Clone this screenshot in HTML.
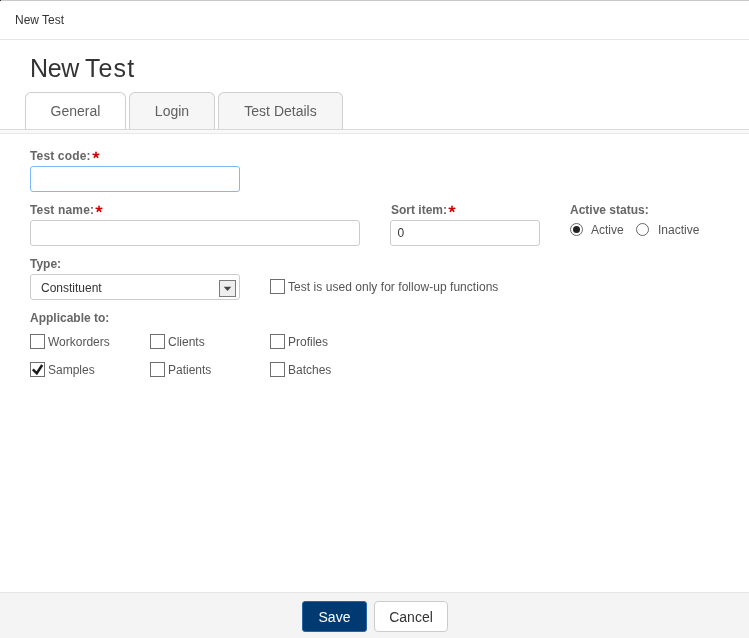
<!DOCTYPE html>
<html><head><meta charset="utf-8">
<style>
*{box-sizing:border-box;margin:0;padding:0}
html,body{width:749px;height:638px;overflow:hidden;background:#fff;font-family:"Liberation Sans",sans-serif}
#wrap{position:absolute;left:0;top:0;width:749px;height:638px;will-change:transform}
.a{position:absolute;white-space:nowrap}
#topline{left:0;top:0;width:749px;height:1px;background:#c9c9c9}
#corner{left:0;top:0;width:1px;height:1px;background:#333}
#hdr{left:15px;top:13px;font-size:12px;color:#333;line-height:14px}
#hdrline{left:0;top:39px;width:749px;height:1px;background:#e6e6e6}
.title{top:54px;font-size:25px;color:#333;line-height:28px}
.tab{position:absolute;top:92px;height:38px;border:1px solid #cfcfcf;border-bottom:none;border-radius:6px 6px 0 0;background:#f6f6f6;font-size:14px;color:#606060;text-align:center;line-height:36px}
.tab.act{background:#fff}
#panelline1{left:0;top:129px;width:749px;height:1px;background:#d9d9d9}
#panelbg{left:0;top:130px;width:749px;height:3px;background:#f9f9f9}
#panelline2{left:0;top:133px;width:749px;height:1px;background:#e8e8e8}
.lbl{position:absolute;font-size:12px;font-weight:bold;color:#666;line-height:14px;white-space:nowrap}
.req{color:#c00;font-size:14px;margin-left:3px}
.inp{position:absolute;height:26px;border:1px solid #ccc;border-radius:3px;background:#fff;font-size:12px;color:#333;line-height:24px;padding-left:7px}
.inp.focus{border-color:#7db8fb}
.txt{position:absolute;font-size:12px;color:#555;line-height:14px;white-space:nowrap}
.cb{position:absolute;width:15px;height:15px;border:1px solid #6f6f6f;background:#fff}
.radio{position:absolute;width:13px;height:13px;border:1px solid #666;border-radius:50%;background:#fff}
#footer{left:0;top:592px;width:749px;height:46px;background:#f4f4f4;border-top:1px solid #e6e6e6}
.btn{position:absolute;top:601px;height:31px;border-radius:4px;font-size:14px;text-align:center;line-height:31px}
</style></head><body><div id="wrap">
<div class="a" id="topline"></div>
<div class="a" id="corner"></div>
<div class="a" id="hdr">New Test</div>
<div class="a" id="hdrline"></div>
<div class="a title" style="left:30px;letter-spacing:-0.3px">New</div><div class="a title" style="left:85px;letter-spacing:1.1px">Test</div>

<div class="tab act" style="left:25px;width:101px">General</div>
<div class="tab" style="left:129px;width:86px">Login</div>
<div class="tab" style="left:218px;width:125px">Test Details</div>
<div class="a" id="panelline1"></div>
<div class="a" id="panelbg"></div>
<div class="a" id="panelline2"></div>

<div class="lbl" style="left:30px;top:149px;letter-spacing:0.15px">Test code:</div><svg class="a" style="left:90.8px;top:150.3px" width="10" height="10" viewBox="-5 -5 10 10"><g stroke="#d00000" stroke-width="1.6" stroke-linecap="round"><line x1="0" y1="0" x2="0" y2="-2.8"/><line x1="0" y1="0" x2="2.8" y2="-0.8"/><line x1="0" y1="0" x2="-2.8" y2="-0.8"/><line x1="0" y1="0" x2="1.7" y2="2.3"/><line x1="0" y1="0" x2="-1.7" y2="2.3"/></g></svg>
<div class="inp focus" style="left:30px;top:166px;width:210px"></div>

<div class="lbl" style="left:30px;top:203px;letter-spacing:0.17px">Test name:</div><svg class="a" style="left:94.2px;top:204.2px" width="10" height="10" viewBox="-5 -5 10 10"><g stroke="#d00000" stroke-width="1.6" stroke-linecap="round"><line x1="0" y1="0" x2="0" y2="-2.8"/><line x1="0" y1="0" x2="2.8" y2="-0.8"/><line x1="0" y1="0" x2="-2.8" y2="-0.8"/><line x1="0" y1="0" x2="1.7" y2="2.3"/><line x1="0" y1="0" x2="-1.7" y2="2.3"/></g></svg>
<div class="inp" style="left:30px;top:220px;width:330px"></div>

<div class="lbl" style="left:391px;top:203px">Sort item:</div><svg class="a" style="left:446.5px;top:204.2px" width="10" height="10" viewBox="-5 -5 10 10"><g stroke="#d00000" stroke-width="1.6" stroke-linecap="round"><line x1="0" y1="0" x2="0" y2="-2.8"/><line x1="0" y1="0" x2="2.8" y2="-0.8"/><line x1="0" y1="0" x2="-2.8" y2="-0.8"/><line x1="0" y1="0" x2="1.7" y2="2.3"/><line x1="0" y1="0" x2="-1.7" y2="2.3"/></g></svg>
<div class="inp" style="left:390px;top:220px;width:150px;padding-left:6.5px">0</div>

<div class="lbl" style="left:570px;top:203px">Active status:</div>
<div class="radio" style="left:570px;top:223px"></div>
<div class="a" style="left:573px;top:226px;width:7px;height:7px;border-radius:50%;background:#222"></div>
<div class="txt" style="left:591px;top:223px">Active</div>
<div class="radio" style="left:636px;top:223px"></div>
<div class="txt" style="left:658px;top:223px">Inactive</div>

<div class="lbl" style="left:30px;top:257px">Type:</div>
<div class="inp" style="left:30px;top:274px;width:210px;color:#333;padding-left:10px;line-height:26px">Constituent</div>
<div class="a" style="left:219px;top:280px;width:17px;height:17px;border:1px solid #7a7a7a;background:#eee"></div>
<svg class="a" style="left:219px;top:280px" width="17" height="17"><path d="M4.7 6.8 L12.3 6.8 L8.5 11 Z" fill="#444"/></svg>

<div class="cb" style="left:270px;top:279px"></div>
<div class="txt" style="left:288px;top:280px;letter-spacing:0.04px">Test is used only for follow-up functions</div>

<div class="lbl" style="left:30px;top:311px">Applicable to:</div>

<div class="cb" style="left:30px;top:334px"></div>
<div class="txt" style="left:48px;top:335px">Workorders</div>
<div class="cb" style="left:150px;top:334px"></div>
<div class="txt" style="left:168px;top:335px">Clients</div>
<div class="cb" style="left:270px;top:334px"></div>
<div class="txt" style="left:288px;top:335px">Profiles</div>

<div class="cb" style="left:30px;top:362px"></div>
<svg class="a" style="left:30px;top:362px" width="15" height="15"><path d="M2.8 7.3 L6.8 11.3 L12.2 3" stroke="#1a1a1a" stroke-width="2.5" fill="none"/></svg>
<div class="txt" style="left:48px;top:363px">Samples</div>
<div class="cb" style="left:150px;top:362px"></div>
<div class="txt" style="left:168px;top:363px">Patients</div>
<div class="cb" style="left:270px;top:362px"></div>
<div class="txt" style="left:288px;top:363px">Batches</div>

<div class="a" id="footer"></div>
<div class="btn" style="left:302px;width:65px;background:#003a70;border:1px solid #2566a8;color:#fff;border-radius:3px">Save</div>
<div class="btn" style="left:374px;width:74px;background:#fff;border:1px solid #ccc;color:#333">Cancel</div>
</div></body></html>
